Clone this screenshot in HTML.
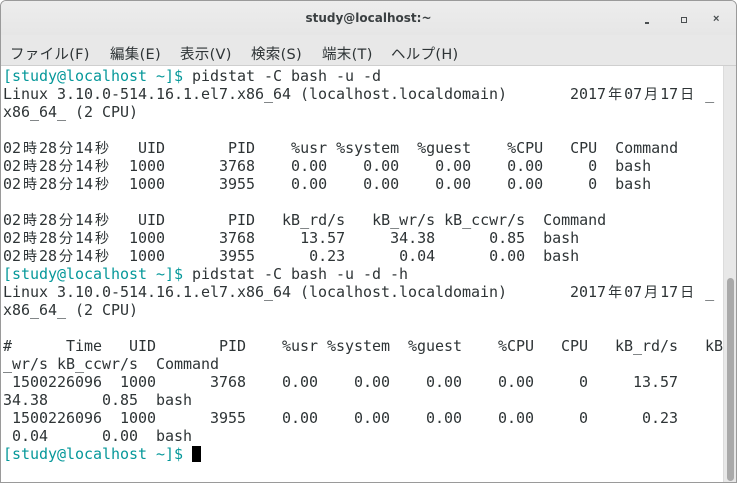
<!DOCTYPE html>
<html><head><meta charset="utf-8"><style>
html,body{margin:0;padding:0;background:#fff;}
body{width:737px;height:483px;overflow:hidden;position:relative;font-family:"Liberation Sans","Noto Sans CJK JP",sans-serif;}
.win{position:absolute;left:0;top:0;width:735px;height:481px;border:1px solid #9a9a9a;border-radius:6px 6px 0 0;overflow:hidden;background:#fff;}
.title{position:absolute;left:0;top:0;width:735px;height:34px;background:linear-gradient(#ededed,#e6e6e6);}
.title .t{position:absolute;left:0;width:735px;text-align:center;top:10px;font-size:12px;font-weight:bold;color:#3a3f41;font-family:"DejaVu Sans",sans-serif;}
.menu{position:absolute;left:0;top:34px;width:735px;height:30px;background:#e8e8e8;border-bottom:1px solid #cfcfcf;}
.menu span{position:absolute;top:8px;font-size:14.5px;color:#2e3436;font-family:"DejaVu Sans","Noto Sans CJK JP",sans-serif;letter-spacing:0.3px;}
.term{position:absolute;left:2px;top:66px;font-family:"DejaVu Sans Mono","Liberation Mono","Noto Sans CJK JP",monospace;font-size:15px;letter-spacing:-0.03px;color:#2e3436;}
.term div{height:18px;line-height:18px;white-space:pre;}
.w{display:inline-block;width:18px;text-align:center;font-family:"Noto Sans CJK JP",sans-serif;font-size:14px;}
.p{color:#06989a;}
.cur{display:inline-block;width:9px;height:16px;background:#000;vertical-align:-3px;}
.sb{position:absolute;left:722px;top:65px;width:13px;height:416px;background:#e8e8e8;border-left:1px solid #dcdcdc;}
.th{position:absolute;left:3px;top:212px;width:7px;height:203px;background:#a9a9a9;border-radius:4px;}
</style></head><body>
<div class="win">
<div class="title"><div class="t">study@localhost:~</div>
<div style="position:absolute;left:644px;top:21px;width:4px;height:2px;background:#4a4f51"></div>
<div style="position:absolute;left:680px;top:16px;width:4px;height:4px;border:1px solid #4a4f51;"></div>
<div style="position:absolute;left:712px;top:12px;font-size:11px;color:#4a4f51;font-weight:bold">×</div>
</div>
<div class="menu">
<span style="left:9px">ファイル(F)</span>
<span style="left:109px">編集(E)</span>
<span style="left:179px">表示(V)</span>
<span style="left:250px">検索(S)</span>
<span style="left:321px">端末(T)</span>
<span style="left:390px">ヘルプ(H)</span>
</div>
<div class="term">
<div><span class="p">[study@localhost ~]$ </span>pidstat -C bash -u -d</div>
<div>Linux 3.10.0-514.16.1.el7.x86_64 (localhost.localdomain)       2017<span class="w">年</span>07<span class="w">月</span>17<span class="w">日</span> _</div>
<div>x86_64_ (2 CPU)</div>
<div> </div>
<div>02<span class="w">時</span>28<span class="w">分</span>14<span class="w">秒</span>   UID       PID    %usr %system  %guest    %CPU   CPU  Command</div>
<div>02<span class="w">時</span>28<span class="w">分</span>14<span class="w">秒</span>  1000      3768    0.00    0.00    0.00    0.00     0  bash</div>
<div>02<span class="w">時</span>28<span class="w">分</span>14<span class="w">秒</span>  1000      3955    0.00    0.00    0.00    0.00     0  bash</div>
<div> </div>
<div>02<span class="w">時</span>28<span class="w">分</span>14<span class="w">秒</span>   UID       PID   kB_rd/s   kB_wr/s kB_ccwr/s  Command</div>
<div>02<span class="w">時</span>28<span class="w">分</span>14<span class="w">秒</span>  1000      3768     13.57     34.38      0.85  bash</div>
<div>02<span class="w">時</span>28<span class="w">分</span>14<span class="w">秒</span>  1000      3955      0.23      0.04      0.00  bash</div>
<div><span class="p">[study@localhost ~]$ </span>pidstat -C bash -u -d -h</div>
<div>Linux 3.10.0-514.16.1.el7.x86_64 (localhost.localdomain)       2017<span class="w">年</span>07<span class="w">月</span>17<span class="w">日</span> _</div>
<div>x86_64_ (2 CPU)</div>
<div> </div>
<div>#      Time   UID       PID    %usr %system  %guest    %CPU   CPU   kB_rd/s   kB</div>
<div>_wr/s kB_ccwr/s  Command</div>
<div> 1500226096  1000      3768    0.00    0.00    0.00    0.00     0     13.57</div>
<div>34.38      0.85  bash</div>
<div> 1500226096  1000      3955    0.00    0.00    0.00    0.00     0      0.23</div>
<div> 0.04      0.00  bash</div>
<div><span class="p">[study@localhost ~]$ </span><span class="cur"></span></div>
</div>
<div class="sb"><div class="th"></div></div>
</div>
</body></html>
